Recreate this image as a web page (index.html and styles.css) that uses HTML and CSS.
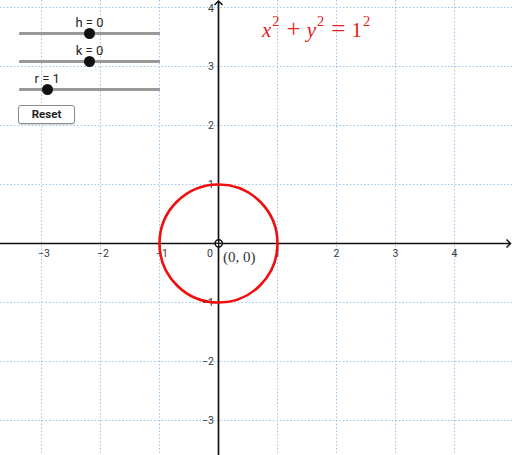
FILE: index.html
```html
<!DOCTYPE html>
<html>
<head>
<meta charset="utf-8">
<link rel="stylesheet" href="styles.css">
</head>
<body>
<div class="board">
  <svg class="canvas" width="512" height="455" viewBox="0 0 512 455" xmlns="http://www.w3.org/2000/svg">
    <g class="grid">
      <line x1="41.5" y1="0" x2="41.5" y2="455"/>
      <line x1="100.5" y1="0" x2="100.5" y2="455"/>
      <line x1="159.5" y1="0" x2="159.5" y2="455"/>
      <line x1="277.5" y1="0" x2="277.5" y2="455"/>
      <line x1="336.5" y1="0" x2="336.5" y2="455"/>
      <line x1="395.5" y1="0" x2="395.5" y2="455"/>
      <line x1="454.5" y1="0" x2="454.5" y2="455"/>
      <line x1="0" y1="7.5" x2="512" y2="7.5"/>
      <line x1="0" y1="66.5" x2="512" y2="66.5"/>
      <line x1="0" y1="125.5" x2="512" y2="125.5"/>
      <line x1="0" y1="184.5" x2="512" y2="184.5"/>
      <line x1="0" y1="302.5" x2="512" y2="302.5"/>
      <line x1="0" y1="361.5" x2="512" y2="361.5"/>
      <line x1="0" y1="420.5" x2="512" y2="420.5"/>
    </g>
    <g class="axes">
      <line x1="0" y1="243.5" x2="510.5" y2="243.5"/>
      <line x1="218.5" y1="455" x2="218.5" y2="1"/>
      <polyline points="506.5,239.5 510.5,243.5 506.5,247.5"/>
      <polyline points="214.5,5 218.5,1 222.5,5"/>
    </g>
    <g class="ticks-x">
      <text x="44" y="257">−3</text>
      <text x="103" y="257">−2</text>
      <text x="162" y="257">−1</text>
      <text x="277.5" y="257">1</text>
      <text x="336.5" y="257">2</text>
      <text x="395.5" y="257">3</text>
      <text x="454.5" y="257">4</text>
    </g>
    <g class="ticks-y">
      <text x="214" y="11.5">4</text>
      <text x="214" y="70">3</text>
      <text x="214" y="129">2</text>
      <text x="214" y="188">1</text>
      <text x="213" y="257">0</text>
      <text x="214" y="306">−1</text>
      <text x="214" y="365">−2</text>
      <text x="214" y="424">−3</text>
    </g>
    <circle class="curve" cx="218.5" cy="243.5" r="59"/>
    <g class="point">
      <circle cx="218.7" cy="243.3" r="3.6"/>
      <line x1="218.7" y1="239" x2="218.7" y2="247.6"/>
      <line x1="214.4" y1="243.3" x2="223" y2="243.3"/>
    </g>
    <text class="point-label" x="223" y="262">(0, 0)</text>
  </svg>

  <div class="equation"><span class="var">x</span><sup>2</sup><span class="op">+</span><span class="var">y</span><sup>2</sup><span class="op">=</span><span class="num">1</span><sup>2</sup></div>

  <div class="controls">
    <div class="slider" style="--v:0.5">
      <span class="slider-label">h = 0</span>
      <span class="track"></span>
      <span class="knob"></span>
    </div>
    <div class="slider" style="--v:0.5">
      <span class="slider-label">k = 0</span>
      <span class="track"></span>
      <span class="knob"></span>
    </div>
    <div class="slider" style="--v:0.2">
      <span class="slider-label">r = 1</span>
      <span class="track"></span>
      <span class="knob"></span>
    </div>
    <button class="reset" type="button">Reset</button>
  </div>
</div>
</body>
</html>
```

FILE: styles.css
```css
html, body {
  margin: 0;
  padding: 0;
  background: #ffffff;
}

.board {
  position: relative;
  width: 512px;
  height: 455px;
  overflow: hidden;
  background: #ffffff;
  font-family: Roboto, "Liberation Sans", sans-serif;
}

.canvas {
  display: block;
}

.grid line {
  stroke: #9cc6f2;
  stroke-width: 1;
  stroke-dasharray: 1.5 2;
}

.axes line {
  stroke: #111111;
  stroke-width: 1.7;
}

.axes polyline {
  fill: none;
  stroke: #111111;
  stroke-width: 1.5;
}

.ticks-x text,
.ticks-y text {
  font-family: Roboto, "Liberation Sans", sans-serif;
  font-size: 10.5px;
  fill: #3a3a3a;
}

.ticks-x text {
  text-anchor: middle;
}

.ticks-y text {
  text-anchor: end;
}

.curve {
  fill: none;
  stroke: #f20c0c;
  stroke-width: 2.6;
}

.point circle {
  fill: #ffffff;
  stroke: #111111;
  stroke-width: 1.5;
}

.point line {
  stroke: #111111;
  stroke-width: 1.3;
}

.point-label {
  font-family: "Liberation Serif", "DejaVu Serif", serif;
  font-size: 15px;
  fill: #333333;
}

.equation {
  position: absolute;
  left: 262px;
  top: 18px;
  font-family: "Liberation Serif", "DejaVu Serif", serif;
  font-size: 21px;
  line-height: 21px;
  color: #e3201c;
  white-space: nowrap;
}

.equation .var {
  font-style: italic;
}

.equation sup {
  font-size: 14.5px;
  line-height: 0;
  vertical-align: 0;
  position: relative;
  top: -11px;
  margin-left: 1px;
}

.equation .op {
  display: inline-block;
  font-size: 25px;
  margin: 0 6px 0 7px;
}

.controls {
  position: absolute;
  left: 19px;
  top: 14px;
  display: flex;
  flex-direction: column;
  align-items: flex-start;
}

.slider {
  position: relative;
  width: 141px;
  height: 28px;
}

.slider-label {
  position: absolute;
  top: 1px;
  left: calc(var(--v) * 141px);
  transform: translateX(-50%);
  font-size: 13px;
  line-height: 15px;
  color: #222222;
  white-space: nowrap;
}

.track {
  position: absolute;
  left: 0;
  right: 0;
  top: 18px;
  height: 3px;
  background: #999999;
  border-radius: 1px;
}

.knob {
  position: absolute;
  top: 14px;
  left: calc(var(--v) * 141px - 5.5px);
  width: 11px;
  height: 11px;
  border-radius: 50%;
  background: #111111;
}

.reset {
  margin: 7px 0 0 -1px;
  width: 57px;
  height: 19px;
  padding: 0;
  border: 1px solid #8a8a8a;
  border-radius: 3px;
  background: #ffffff;
  box-shadow: 0 1px 1px rgba(0, 0, 0, 0.15);
  font-family: Roboto, "Liberation Sans", sans-serif;
  font-size: 11.5px;
  font-weight: 700;
  color: #222222;
  line-height: 17px;
}
```
